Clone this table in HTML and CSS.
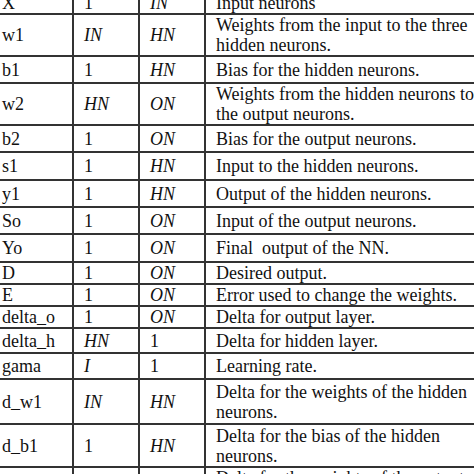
FILE: index.html
```html
<!DOCTYPE html>
<html lang="en">
<head>
<meta charset="utf-8">
<title>NN variables</title>
<link rel="stylesheet" href="styles.css">
</head>
<body>
<div class="page">
<table class="vars">
<colgroup><col class="c-name"><col class="c-rows"><col class="c-cols"><col class="c-desc"></colgroup>
<tbody>
<tr class="h22"><td>X</td><td>1</td><td><i>IN</i></td><td>Input neurons</td></tr>
<tr class="h42"><td>w1</td><td><i>IN</i></td><td><i>HN</i></td><td>Weights from the input to the three hidden neurons.</td></tr>
<tr class="h27"><td>b1</td><td>1</td><td><i>HN</i></td><td>Bias for the hidden neurons.</td></tr>
<tr class="h42"><td>w2</td><td><i>HN</i></td><td><i>ON</i></td><td>Weights from the hidden neurons to the output neurons.</td></tr>
<tr class="h27"><td>b2</td><td>1</td><td><i>ON</i></td><td>Bias for the output neurons.</td></tr>
<tr class="h28"><td>s1</td><td>1</td><td><i>HN</i></td><td>Input to the hidden neurons.</td></tr>
<tr class="h27"><td>y1</td><td>1</td><td><i>HN</i></td><td>Output of the hidden neurons.</td></tr>
<tr class="h27"><td>So</td><td>1</td><td><i>ON</i></td><td>Input of the output neurons.</td></tr>
<tr class="h28"><td>Yo</td><td>1</td><td><i>ON</i></td><td>Final &nbsp;output of the NN.</td></tr>
<tr class="h21"><td>D</td><td>1</td><td><i>ON</i></td><td>Desired output.</td></tr>
<tr class="h22"><td>E</td><td>1</td><td><i>ON</i></td><td>Error used to change the weights.</td></tr>
<tr class="h22"><td>delta_o</td><td>1</td><td><i>ON</i></td><td>Delta for output layer.</td></tr>
<tr class="h25"><td>delta_h</td><td><i>HN</i></td><td>1</td><td>Delta for hidden layer.</td></tr>
<tr class="h26"><td>gama</td><td><i>I</i></td><td>1</td><td>Learning rate.</td></tr>
<tr class="h45"><td>d_w1</td><td><i>IN</i></td><td><i>HN</i></td><td>Delta for the weights of the hidden neurons.</td></tr>
<tr class="h43"><td>d_b1</td><td>1</td><td><i>HN</i></td><td>Delta for the bias of the hidden neurons.</td></tr>
<tr class="h42"><td>d_w2</td><td><i>HN</i></td><td><i>ON</i></td><td>Delta for the weights of the output neurons.</td></tr>
</tbody>
</table>
</div>
</body>
</html>
```

FILE: styles.css
```css
html, body {
  margin: 0;
  padding: 0;
  background: #ffffff;
}
body {
  width: 474px;
  height: 474px;
  overflow: hidden;
  font-family: "Liberation Serif", "Times New Roman", serif;
  font-size: 18px;
  color: #111111;
}
.page {
  padding-top: 1px;
  margin: -10px 0 0 -10px;
}
.vars {
  border-collapse: collapse;
  table-layout: fixed;
  width: 512px;
}
.c-name { width: 82px; }
.c-rows { width: 66px; }
.c-cols { width: 66px; }
.c-desc { width: 298px; }
.vars td {
  border: 2px solid #333333;
  padding: 0 10px;
  line-height: 20px;
  vertical-align: middle;
  white-space: normal;
}
.vars i { font-style: italic; }
.h21 { height: 21px; }
.h22 { height: 22px; }
.h25 { height: 25px; }
.h26 { height: 26px; }
.h27 { height: 27px; }
.h28 { height: 28px; }
.h42 { height: 42px; }
.h43 { height: 43px; }
.h45 { height: 45px; }
```
